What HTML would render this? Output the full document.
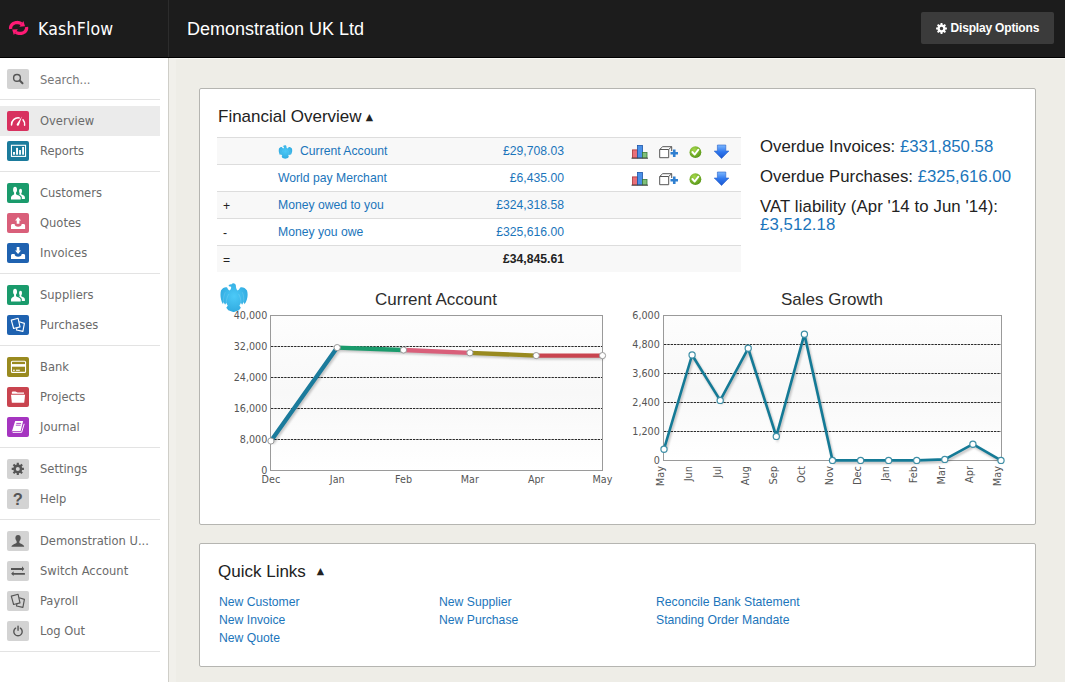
<!DOCTYPE html>
<html><head><meta charset="utf-8"><title>KashFlow</title>
<style>
*{box-sizing:border-box;margin:0;padding:0}
html,body{width:1065px;height:682px;overflow:hidden}
body{background:#eeede7;font-family:"Liberation Sans",sans-serif;position:relative;color:#333}
a{color:#1b75bb;text-decoration:none}
#hdr{position:absolute;left:0;top:0;width:1065px;height:58px;background:#1c1c1c;border-bottom:1px solid #000}
#hdr .sep{position:absolute;left:168px;top:0;width:1px;height:57px;background:#2c2c2c}
#logo{position:absolute;left:8px;top:20px}
#brand{position:absolute;left:38px;top:17.500px;font-family:'DejaVu Sans Condensed','DejaVu Sans',sans-serif;font-size:17.500px;letter-spacing:.2px;line-height:22px;color:#fff}
#co{position:absolute;left:187px;top:18px;font-size:18px;line-height:22px;color:#fff}
#dopt{position:absolute;left:921px;top:12px;width:133px;height:32px;background:#3b3b3b;border-radius:2px;color:#fff;font-weight:bold;font-size:12px;letter-spacing:-.18px;line-height:32px;padding-left:29.500px}
#dopt svg{position:absolute;left:15px;top:10.500px}
#main{position:absolute;left:169px;top:58px;width:896px;height:624px;border-top:1px solid #f8f8f4;border-left:7px solid #f1f0eb}
#side{position:absolute;left:0;top:58px;width:169px;height:624px;background:#fff;border-right:1px solid #cfcec8}
.it{position:absolute;left:0;width:160px;height:30px}
.it.sel{background:#ebebeb}
.it .ic{position:absolute;left:7px;top:5px}
.it .tx{position:absolute;left:40px;top:0;line-height:30px;font-family:"DejaVu Sans Condensed","DejaVu Sans",sans-serif;font-size:12.800px;color:#6a6a6a;white-space:nowrap}
.dv{position:absolute;left:0;width:160px;height:1px;background:#e3e3e3}
.panel{position:absolute;left:199px;width:837px;background:#fff;border:1px solid #b5b5b1;border-radius:2px}
h2{position:absolute;font-weight:normal;font-size:17px;line-height:20px;color:#222;white-space:nowrap}
h2 i{font-style:normal;font-family:'DejaVu Sans',sans-serif;font-size:9.500px;position:relative;top:-2.500px;left:-0.500px}
#tbl{position:absolute;left:17px;top:48px;width:524px;height:136px;border-top:1px solid #ddd}
.tr{position:absolute;left:0;width:524px;height:27px;border-bottom:1px solid #ddd;font-size:12.200px;line-height:26px}
.tr .sym{position:absolute;left:6px;top:1px;color:#222}
.tr .nm{position:absolute;left:61px;white-space:nowrap}
.tr .amt{position:absolute;right:177px;white-space:nowrap}
.tr .tot{color:#222}
.tr:last-child{border-bottom:0;height:26px}
.tr .ai{position:absolute;top:5px}
.tr .bsm{position:absolute;left:61px;top:7px}
.ov{position:absolute;left:560px;font-size:16.800px;line-height:18.400px;color:#222;white-space:nowrap}
.chart{position:absolute}
.cl{font-family:"DejaVu Sans",sans-serif;font-size:9.600px;fill:#555}
.cx{font-size:9.800px}
.ct{position:absolute;font-size:17px;line-height:20px;color:#2d2d2d;white-space:nowrap;text-align:center}
.ql{position:absolute;font-size:12.200px;line-height:18px;white-space:nowrap}
</style></head><body>
<div id="hdr"><div class="sep"></div>
<svg id="logo" width="22" height="16" viewBox="0 0 22 16"><g fill="none" stroke="#ff1a75" stroke-width="3.300"><path d="M2.70 8.91 L2.62 8.35 L2.60 7.79 L2.66 7.23 L2.79 6.67 L2.98 6.13 L3.24 5.61 L3.56 5.12 L3.94 4.65 L4.38 4.23 L4.87 3.84 L5.41 3.49 L5.98 3.19 L6.59 2.95 L7.22 2.75 L7.88 2.61 L8.55 2.53 L9.23 2.51 L9.90 2.55 L10.57 2.64 L11.22 2.79 L11.85 2.99 L12.46 3.25 L13.02 3.56 L13.55 3.91"/><path d="M18.50 7.01 L18.58 7.57 L18.60 8.13 L18.54 8.69 L18.41 9.25 L18.22 9.79 L17.96 10.31 L17.64 10.80 L17.26 11.27 L16.82 11.69 L16.33 12.08 L15.79 12.43 L15.22 12.73 L14.61 12.97 L13.98 13.17 L13.32 13.31 L12.65 13.39 L11.97 13.41 L11.30 13.37 L10.63 13.28 L9.98 13.13 L9.35 12.93 L8.74 12.67 L8.18 12.36 L7.65 12.01"/></g><path d="M11.38 6.66 L16.99 6.30 L15.38 0.91 Z" fill="#ff1a75"/><path d="M9.82 9.26 L4.21 9.62 L5.82 15.01 Z" fill="#ff1a75"/></svg>
<div id="brand">KashFlow</div>
<div id="co">Demonstration UK Ltd</div>
<div id="dopt"><svg width="11" height="11" viewBox="0 0 12 12"><path d="M11.91 4.97 L11.91 7.03 L10.36 7.12 L9.87 8.29 L10.91 9.45 L9.45 10.91 L8.29 9.87 L7.12 10.36 L7.03 11.91 L4.97 11.91 L4.88 10.36 L3.71 9.87 L2.55 10.91 L1.09 9.45 L2.13 8.29 L1.64 7.12 L0.09 7.03 L0.09 4.97 L1.64 4.88 L2.13 3.71 L1.09 2.55 L2.55 1.09 L3.71 2.13 L4.88 1.64 L4.97 0.09 L7.03 0.09 L7.12 1.64 L8.29 2.13 L9.45 1.09 L10.91 2.55 L9.87 3.71 L10.36 4.88 Z M7.90 6.00 A1.9 1.9 0 1 0 4.10 6.00 A1.9 1.9 0 1 0 7.90 6.00 Z" fill="#fff" fill-rule="evenodd"/></svg>Display Options</div>
</div>
<div id="main"></div>
<div id="side">
<div class="it" style="top:6px"><svg class="ic" viewBox="0 0 22 20" width="22" height="20"><rect width="22" height="20" rx="2" fill="#d3d3d3"/><circle cx="10" cy="8.900" r="3.400" fill="none" stroke="#555" stroke-width="1.400"/><path d="M12.700 11.500 L15.500 14.200" stroke="#555" stroke-width="2" stroke-linecap="round"/></svg><span class="tx" style=color:#777;top:1px>Search...</span></div>
<div class="it sel" style="top:48px"><svg class="ic" viewBox="0 0 22 20" width="22" height="20"><rect width="22" height="20" rx="2" fill="#d8315f"/><path d="M4.500 14 A6.800 6.800 0 0 1 12.200 6.900" fill="none" stroke="#fff" stroke-width="1.500" stroke-linecap="round"/><path d="M16 8.700 A6.800 6.800 0 0 1 17.600 14.200" fill="none" stroke="#fff" stroke-width="1.500" stroke-linecap="round"/><path d="M9.800 13 L14.900 5.400 L12 14.100 A1.200 1.200 0 0 1 9.800 13 Z" fill="#fff"/></svg><span class="tx">Overview</span></div>
<div class="it" style="top:78px"><svg class="ic" viewBox="0 0 22 20" width="22" height="20"><rect width="22" height="20" rx="2" fill="#1b7b9c"/><rect x="4.450" y="4.300" width="14.100" height="11.100" fill="none" stroke="#fff" stroke-width="1.100"/><rect x="6" y="11" width="1.950" height="2.700" fill="#fff"/><rect x="9.050" y="6.850" width="1.950" height="6.850" fill="#fff"/><rect x="12.100" y="9.050" width="1.850" height="4.650" fill="#fff"/><rect x="15.150" y="6" width="1.850" height="7.700" fill="#fff"/></svg><span class="tx">Reports</span></div>
<div class="it" style="top:120px"><svg class="ic" viewBox="0 0 22 20" width="22" height="20"><rect width="22" height="20" rx="2" fill="#1a9b6c"/><ellipse cx="8.050" cy="6.700" rx="1.950" ry="2.950" fill="#fff"/><path d="M7.100 8.500 H9 V11.300 C10.200 12.300 13.700 12.800 13.700 14.600 V16.500 H4 V14.600 C4 12.800 6 12.300 7.100 11.300 Z" fill="#fff"/><ellipse cx="13.550" cy="8.100" rx="1.500" ry="2.400" fill="#fff"/><path d="M12.800 9.800 H14.300 V11.300 C15.200 12.100 17.900 12.500 17.900 14.200 V16.100 H14.800 V14.300 C14.800 12.900 13.400 12.300 12.400 11.700 Z" fill="#fff"/></svg><span class="tx">Customers</span></div>
<div class="it" style="top:150px"><svg class="ic" viewBox="0 0 22 20" width="22" height="20"><rect width="22" height="20" rx="2" fill="#d95f7a"/><path d="M11.050 3.900 L14 7.400 H12.400 V10.800 H9.700 V7.400 H8.100 Z" fill="#fff"/><path d="M4 16.100 V12.500 C4 11.500 4.800 11 5.600 11 H7.600 C7.600 12.800 9 13.800 11.100 13.800 C13.200 13.800 14.700 12.800 14.700 11 H16.500 C17.400 11 18.100 11.500 18.100 12.500 V16.100 Z" fill="#fff"/></svg><span class="tx">Quotes</span></div>
<div class="it" style="top:180px"><svg class="ic" viewBox="0 0 22 20" width="22" height="20"><rect width="22" height="20" rx="2" fill="#1f62b0"/><path d="M11.050 11 L14 7.600 H12.400 V4 H9.700 V7.600 H8.100 Z" fill="#fff"/><path d="M4 16.100 V12.500 C4 11.500 4.800 11 5.600 11 H7.600 C7.600 12.800 9 13.800 11.100 13.800 C13.200 13.800 14.700 12.800 14.700 11 H16.500 C17.400 11 18.100 11.500 18.100 12.500 V16.100 Z" fill="#fff"/></svg><span class="tx">Invoices</span></div>
<div class="it" style="top:222px"><svg class="ic" viewBox="0 0 22 20" width="22" height="20"><rect width="22" height="20" rx="2" fill="#1a9b6c"/><ellipse cx="8.050" cy="6.700" rx="1.950" ry="2.950" fill="#fff"/><path d="M7.100 8.500 H9 V11.300 C10.200 12.300 13.700 12.800 13.700 14.600 V16.500 H4 V14.600 C4 12.800 6 12.300 7.100 11.300 Z" fill="#fff"/><ellipse cx="13.550" cy="8.100" rx="1.500" ry="2.400" fill="#fff"/><path d="M12.800 9.800 H14.300 V11.300 C15.200 12.100 17.900 12.500 17.900 14.200 V16.100 H14.800 V14.300 C14.800 12.900 13.400 12.300 12.400 11.700 Z" fill="#fff"/></svg><span class="tx">Suppliers</span></div>
<div class="it" style="top:252px"><svg class="ic" viewBox="0 0 22 20" width="22" height="20"><rect width="22" height="20" rx="2" fill="#1f62b0"/><g fill="none" stroke="#fff" stroke-width="1.150" stroke-linejoin="round"><path d="M4.300 5.100 L11.100 3.300 L13 11.900 L6.600 13.500 Z"/><path d="M12.200 6.700 L17.400 8.400 L15.900 16.400 L9.500 15 L9.950 12.700"/></g></svg><span class="tx">Purchases</span></div>
<div class="it" style="top:294px"><svg class="ic" viewBox="0 0 22 20" width="22" height="20"><rect width="22" height="20" rx="2" fill="#998a1f"/><rect x="4.450" y="4.300" width="14.100" height="11.100" rx="1" fill="none" stroke="#fff" stroke-width="1.100"/><rect x="4.450" y="7.100" width="14.100" height="2.600" fill="#fff"/><rect x="6" y="12.700" width="1.800" height="1.100" fill="#fff"/><rect x="9" y="12.700" width="3.800" height="1.100" fill="#fff"/></svg><span class="tx">Bank</span></div>
<div class="it" style="top:324px"><svg class="ic" viewBox="0 0 22 20" width="22" height="20"><rect width="22" height="20" rx="2" fill="#c9444f"/><path d="M4.850 6.800 V5.300 C4.850 4.700 5.300 4.400 5.800 4.400 H8.400 L10.600 5.500 H17 V6.800 Z" fill="#fff"/><path d="M4 7.700 H18.100 L17.200 15.700 H4.850 Z" fill="#fff"/></svg><span class="tx">Projects</span></div>
<div class="it" style="top:354px"><svg class="ic" viewBox="0 0 22 20" width="22" height="20"><rect width="22" height="20" rx="2" fill="#a535c0"/><path d="M8.200 4 H16.100 L13.700 13.900 H5.100 Z" fill="#fff"/><path d="M5.300 14.700 L5.800 15.300 H14.700 L17.200 6.800" fill="none" stroke="#fff" stroke-width="1"/><path d="M9.300 6.400 H14.100 M8.800 8.200 H13.700" stroke="#a535c0" stroke-width="0.900"/></svg><span class="tx">Journal</span></div>
<div class="it" style="top:396px"><svg class="ic" viewBox="0 0 22 20" width="22" height="20"><rect width="22" height="20" rx="2" fill="#d3d3d3"/><path d="M16.91 8.83 L16.91 10.97 L15.16 11.02 L14.67 12.19 L15.87 13.47 L14.37 14.97 L13.09 13.77 L11.92 14.26 L11.87 16.01 L9.73 16.01 L9.68 14.26 L8.51 13.77 L7.23 14.97 L5.73 13.47 L6.93 12.19 L6.44 11.02 L4.69 10.97 L4.69 8.83 L6.44 8.78 L6.93 7.61 L5.73 6.33 L7.23 4.83 L8.51 6.03 L9.68 5.54 L9.73 3.79 L11.87 3.79 L11.92 5.54 L13.09 6.03 L14.37 4.83 L15.87 6.33 L14.67 7.61 L15.16 8.78 Z M12.80 9.90 A2.0 2.0 0 1 0 8.80 9.90 A2.0 2.0 0 1 0 12.80 9.90 Z" fill="#555" fill-rule="evenodd"/></svg><span class="tx">Settings</span></div>
<div class="it" style="top:426px"><svg class="ic" viewBox="0 0 22 20" width="22" height="20"><rect width="22" height="20" rx="2" fill="#d3d3d3"/><text x="10.900" y="15.700" text-anchor="middle" font-family="Liberation Sans, sans-serif" font-weight="bold" font-size="16.500" fill="#555">?</text></svg><span class="tx">Help</span></div>
<div class="it" style="top:468px"><svg class="ic" viewBox="0 0 22 20" width="22" height="20"><rect width="22" height="20" rx="2" fill="#d3d3d3"/><ellipse cx="11.050" cy="7" rx="2.650" ry="3.100" fill="#555"/><path d="M4.400 15.700 C4.600 14.200 6 13.600 9.600 12 V9 H12.400 V12 C16 13.600 17 14.200 17.200 15.700 Z" fill="#555"/></svg><span class="tx">Demonstration U...</span></div>
<div class="it" style="top:498px"><svg class="ic" viewBox="0 0 22 20" width="22" height="20"><rect width="22" height="20" rx="2" fill="#d3d3d3"/><path d="M4 7.100 H15 V5.300 L17.300 8 L15 10.200 V8.900 H4 Z" fill="#555"/><path d="M17.900 11.900 H6.600 V10.300 L4.100 12.700 L6.600 14.900 V13.700 H17.900 Z" fill="#555"/></svg><span class="tx">Switch Account</span></div>
<div class="it" style="top:528px"><svg class="ic" viewBox="0 0 22 20" width="22" height="20"><rect width="22" height="20" rx="2" fill="#d3d3d3"/><g fill="none" stroke="#555" stroke-width="1.150" stroke-linejoin="round"><path d="M4.300 5.100 L11.100 3.300 L13 11.900 L6.600 13.500 Z"/><path d="M12.200 6.700 L17.400 8.400 L15.900 16.400 L9.500 15 L9.950 12.700"/></g></svg><span class="tx">Payroll</span></div>
<div class="it" style="top:558px"><svg class="ic" viewBox="0 0 22 20" width="22" height="20"><rect width="22" height="20" rx="2" fill="#d3d3d3"/><path d="M8.600 7.160 A4.200 4.200 0 1 0 13.400 7.160" fill="none" stroke="#555" stroke-width="1.400" stroke-linecap="round"/><path d="M11.050 5.100 V9.300" stroke="#555" stroke-width="1.400" stroke-linecap="round"/></svg><span class="tx">Log Out</span></div>
<div class="dv" style="top:41px"></div>
<div class="dv" style="top:113px"></div>
<div class="dv" style="top:215px"></div>
<div class="dv" style="top:287px"></div>
<div class="dv" style="top:389px"></div>
<div class="dv" style="top:461px"></div>
<div class="dv" style="top:593px"></div>
</div>
<div class="panel" id="p1" style="top:88px;height:437px">
<h2 style="left:18px;top:18px">Financial Overview <i>▲</i></h2>
<div id="tbl">
<div class="tr" style="top:0px;background:#f8f8f8"><svg class="bsm" width="14.5" height="14" viewBox="140 120 440 445" preserveAspectRatio="none"><defs><radialGradient id="eg2" cx=".5" cy=".45" r=".6"><stop offset="0" stop-color="#4ccaf8"/><stop offset="1" stop-color="#2fa8de"/></radialGradient></defs><path d="M355 125 C375 125 395 140 395 160 C395 185 400 215 420 232 C440 225 450 205 462 188 C490 178 540 195 562 235 C580 290 575 370 525 442 L512 405 L488 448 L470 418 L452 458 L440 440 C450 470 465 485 470 492 L440 530 L360 560 L280 530 L250 492 C255 485 270 470 280 440 L268 458 L250 418 L232 448 L208 405 L200 442 C160 370 155 290 170 235 C190 195 235 178 262 188 C270 205 280 225 300 232 C318 220 325 200 322 178 L290 168 L285 150 C300 145 320 140 330 138 C338 130 345 125 355 125 Z" fill="url(#eg2)"/><path d="M208 405 C205 350 215 300 235 260 M250 418 C250 370 265 320 290 285 M512 405 C518 350 510 300 492 260 M470 418 C472 370 458 320 435 285" fill="none" stroke="#fff" stroke-opacity=".3" stroke-width="7"/></svg><a class="nm" style="left:83px">Current Account</a><a class="amt">£29,708.03</a><svg class="ai" style="left:414px" width="18" height="16" viewBox="0 0 18 16"><rect x="1.500" y="6.900" width="5" height="8" fill="#e8707a" stroke="#a33" stroke-width=".8"/><rect x="6.500" y="2.500" width="5" height="12.400" fill="#4a90e8" stroke="#1d55a8" stroke-width=".8"/><rect x="11.500" y="9.500" width="4.500" height="5.400" fill="#7fc07a" stroke="#3a7a3a" stroke-width=".8"/><path d="M0.500 15.200 H17" stroke="#444" stroke-width="1"/></svg>
<svg class="ai" style="left:442px" width="20" height="16" viewBox="0 0 20 16"><path d="M0.700 6.500 H9.700 V14.700 H0.700 Z M0.700 6.500 L3.700 3.700 H12.700 L9.700 6.500 M12.700 3.700 V8" fill="#fff" stroke="#555" stroke-width="1"/><path d="M11.500 10.200 H19 M15.250 6.500 V13.900" stroke="#2f7fd0" stroke-width="2.600"/></svg>
<svg class="ai" style="left:471px" width="15" height="16" viewBox="0 0 15 16"><defs><radialGradient id="gg" cx=".4" cy=".3" r=".8"><stop offset="0" stop-color="#a6d84a"/><stop offset="1" stop-color="#4f8f12"/></radialGradient></defs><circle cx="7.400" cy="9.200" r="5.900" fill="url(#gg)"/><path d="M4.400 9 L6.700 11.500 L10.400 6.700" fill="none" stroke="#fff" stroke-width="1.900" stroke-linecap="round" stroke-linejoin="round"/></svg>
<svg class="ai" style="left:495px" width="18" height="16" viewBox="0 0 18 16"><defs><linearGradient id="bg1" x1="0" y1="0" x2="0" y2="1"><stop offset="0" stop-color="#7db8ff"/><stop offset=".5" stop-color="#2f78ee"/><stop offset="1" stop-color="#1a56d0"/></linearGradient></defs><path d="M5.400 2 H13.800 V8 H16.900 L9.550 15.500 L2.200 8 H5.400 Z" fill="url(#bg1)" stroke="#2a62c8" stroke-width=".6"/></svg></div>
<div class="tr" style="top:27px;background:#fff"><a class="nm">World pay Merchant</a><a class="amt">£6,435.00</a><svg class="ai" style="left:414px" width="18" height="16" viewBox="0 0 18 16"><rect x="1.500" y="6.900" width="5" height="8" fill="#e8707a" stroke="#a33" stroke-width=".8"/><rect x="6.500" y="2.500" width="5" height="12.400" fill="#4a90e8" stroke="#1d55a8" stroke-width=".8"/><rect x="11.500" y="9.500" width="4.500" height="5.400" fill="#7fc07a" stroke="#3a7a3a" stroke-width=".8"/><path d="M0.500 15.200 H17" stroke="#444" stroke-width="1"/></svg>
<svg class="ai" style="left:442px" width="20" height="16" viewBox="0 0 20 16"><path d="M0.700 6.500 H9.700 V14.700 H0.700 Z M0.700 6.500 L3.700 3.700 H12.700 L9.700 6.500 M12.700 3.700 V8" fill="#fff" stroke="#555" stroke-width="1"/><path d="M11.500 10.200 H19 M15.250 6.500 V13.900" stroke="#2f7fd0" stroke-width="2.600"/></svg>
<svg class="ai" style="left:471px" width="15" height="16" viewBox="0 0 15 16"><defs><radialGradient id="gg2" cx=".4" cy=".3" r=".8"><stop offset="0" stop-color="#a6d84a"/><stop offset="1" stop-color="#4f8f12"/></radialGradient></defs><circle cx="7.400" cy="9.200" r="5.900" fill="url(#gg2)"/><path d="M4.400 9 L6.700 11.500 L10.400 6.700" fill="none" stroke="#fff" stroke-width="1.900" stroke-linecap="round" stroke-linejoin="round"/></svg>
<svg class="ai" style="left:495px" width="18" height="16" viewBox="0 0 18 16"><defs><linearGradient id="bg2" x1="0" y1="0" x2="0" y2="1"><stop offset="0" stop-color="#7db8ff"/><stop offset=".5" stop-color="#2f78ee"/><stop offset="1" stop-color="#1a56d0"/></linearGradient></defs><path d="M5.400 2 H13.800 V8 H16.900 L9.550 15.500 L2.200 8 H5.400 Z" fill="url(#bg2)" stroke="#2a62c8" stroke-width=".6"/></svg></div>
<div class="tr" style="top:54px;background:#f8f8f8"><span class="sym">+</span><a class="nm">Money owed to you</a><a class="amt">£324,318.58</a></div>
<div class="tr" style="top:81px;background:#fff"><span class="sym">-</span><a class="nm">Money you owe</a><a class="amt">£325,616.00</a></div>
<div class="tr" style="top:108px;background:#f8f8f8"><span class="sym">=</span><b class="amt tot">£34,845.61</b></div>
</div>
<div class="ov" style="top:49px">Overdue Invoices: <a>£331,850.58</a></div>
<div class="ov" style="top:79px">Overdue Purchases: <a>£325,616.00</a></div>
<div class="ov" style="top:108.500px;letter-spacing:.09px">VAT liability (Apr '14 to Jun '14):<br><a>£3,512.18</a></div>
</div>
<svg style="position:absolute;left:219.200px;top:282.900px" width="29.2" height="29.5" viewBox="140 120 440 445" preserveAspectRatio="none"><defs><radialGradient id="eg1" cx=".5" cy=".45" r=".6"><stop offset="0" stop-color="#4ccaf8"/><stop offset="1" stop-color="#2fa8de"/></radialGradient></defs><path d="M355 125 C375 125 395 140 395 160 C395 185 400 215 420 232 C440 225 450 205 462 188 C490 178 540 195 562 235 C580 290 575 370 525 442 L512 405 L488 448 L470 418 L452 458 L440 440 C450 470 465 485 470 492 L440 530 L360 560 L280 530 L250 492 C255 485 270 470 280 440 L268 458 L250 418 L232 448 L208 405 L200 442 C160 370 155 290 170 235 C190 195 235 178 262 188 C270 205 280 225 300 232 C318 220 325 200 322 178 L290 168 L285 150 C300 145 320 140 330 138 C338 130 345 125 355 125 Z" fill="url(#eg1)"/><path d="M208 405 C205 350 215 300 235 260 M250 418 C250 370 265 320 290 285 M512 405 C518 350 510 300 492 260 M470 418 C472 370 458 320 435 285" fill="none" stroke="#fff" stroke-opacity=".3" stroke-width="7"/></svg>
<div class="ct" style="left:336px;top:290px;width:200px">Current Account</div>
<div class="ct" style="left:732px;top:290px;width:200px">Sales Growth</div>
<svg class="chart" style="left:205px;top:285px" width="420" height="215" viewBox="0 0 420 215"><defs><linearGradient id="pg" x1="0" y1="0" x2="0" y2="1"><stop offset="0" stop-color="#fdfdfd"/><stop offset=".5" stop-color="#f8f8f8"/><stop offset="1" stop-color="#ffffff"/></linearGradient><filter id="sh" x="-10%" y="-30%" width="120%" height="160%"><feGaussianBlur stdDeviation="1.200"/></filter></defs><rect x="65.5" y="30.5" width="332.0" height="155.0" fill="url(#pg)" stroke="#9a9a9a" stroke-width="1"/><text x="62.3" y="34.3" text-anchor="end" class="cl">40,000</text><path d="M66 61.5 H397" stroke="#2a2a2a" stroke-width="1" stroke-dasharray="2.400 0.900"/><text x="62.3" y="65.3" text-anchor="end" class="cl">32,000</text><path d="M66 92.5 H397" stroke="#2a2a2a" stroke-width="1" stroke-dasharray="2.400 0.900"/><text x="62.3" y="96.3" text-anchor="end" class="cl">24,000</text><path d="M66 123.5 H397" stroke="#2a2a2a" stroke-width="1" stroke-dasharray="2.400 0.900"/><text x="62.3" y="127.3" text-anchor="end" class="cl">16,000</text><path d="M66 154.5 H397" stroke="#2a2a2a" stroke-width="1" stroke-dasharray="2.400 0.900"/><text x="62.3" y="158.3" text-anchor="end" class="cl">8,000</text><text x="62.3" y="189.3" text-anchor="end" class="cl">0</text><text x="65.9" y="198.3" text-anchor="middle" class="cl">Dec</text><text x="132.2" y="198.3" text-anchor="middle" class="cl">Jan</text><text x="198.5" y="198.3" text-anchor="middle" class="cl">Feb</text><text x="264.9" y="198.3" text-anchor="middle" class="cl">Mar</text><text x="331.2" y="198.3" text-anchor="middle" class="cl">Apr</text><text x="397.5" y="198.3" text-anchor="middle" class="cl">May</text><polyline points="67.4,158.0 133.7,64.6 200.0,67.0 266.4,69.8 332.7,72.6 399.0,72.6" fill="none" stroke="#000" stroke-opacity=".22" stroke-width="4" filter="url(#sh)"/><path d="M65.9 156.0 L132.2 62.6" stroke="#1b7b9c" stroke-width="4.300" stroke-linecap="round"/><path d="M132.2 62.6 L198.5 65.0" stroke="#1a9b6c" stroke-width="4.300" stroke-linecap="round"/><path d="M198.5 65.0 L264.9 67.8" stroke="#d95f7a" stroke-width="4.300" stroke-linecap="round"/><path d="M264.9 67.8 L331.2 70.6" stroke="#998a1f" stroke-width="4.300" stroke-linecap="round"/><path d="M331.2 70.6 L397.5 70.6" stroke="#c9444f" stroke-width="4.300" stroke-linecap="round"/><circle cx="65.9" cy="156.0" r="3.100" fill="#fff" stroke="#999" stroke-width="1"/><circle cx="132.2" cy="62.6" r="3.100" fill="#fff" stroke="#999" stroke-width="1"/><circle cx="198.5" cy="65.0" r="3.100" fill="#fff" stroke="#999" stroke-width="1"/><circle cx="264.9" cy="67.8" r="3.100" fill="#fff" stroke="#999" stroke-width="1"/><circle cx="331.2" cy="70.6" r="3.100" fill="#fff" stroke="#999" stroke-width="1"/><circle cx="397.5" cy="70.6" r="3.100" fill="#fff" stroke="#999" stroke-width="1"/></svg>
<svg class="chart" style="left:625px;top:285px" width="400" height="215" viewBox="0 0 400 215"><rect x="38.5" y="30.5" width="338.0" height="145.0" fill="url(#pg)" stroke="#9a9a9a" stroke-width="1"/><text x="34.8" y="34.4" text-anchor="end" class="cl">6,000</text><path d="M39 59.5 H376" stroke="#2a2a2a" stroke-width="1" stroke-dasharray="2.400 0.900"/><text x="34.8" y="63.4" text-anchor="end" class="cl">4,800</text><path d="M39 88.5 H376" stroke="#2a2a2a" stroke-width="1" stroke-dasharray="2.400 0.900"/><text x="34.8" y="92.4" text-anchor="end" class="cl">3,600</text><path d="M39 117.5 H376" stroke="#2a2a2a" stroke-width="1" stroke-dasharray="2.400 0.900"/><text x="34.8" y="121.4" text-anchor="end" class="cl">2,400</text><path d="M39 146.5 H376" stroke="#2a2a2a" stroke-width="1" stroke-dasharray="2.400 0.900"/><text x="34.8" y="150.4" text-anchor="end" class="cl">1,200</text><text x="34.8" y="179.4" text-anchor="end" class="cl">0</text><text transform="translate(39.3,181) rotate(-90)" text-anchor="end" class="cl cx">May</text><text transform="translate(67.4,181) rotate(-90)" text-anchor="end" class="cl cx">Jun</text><text transform="translate(95.5,181) rotate(-90)" text-anchor="end" class="cl cx">Jul</text><text transform="translate(123.5,181) rotate(-90)" text-anchor="end" class="cl cx">Aug</text><text transform="translate(151.6,181) rotate(-90)" text-anchor="end" class="cl cx">Sep</text><text transform="translate(179.7,181) rotate(-90)" text-anchor="end" class="cl cx">Oct</text><text transform="translate(207.8,181) rotate(-90)" text-anchor="end" class="cl cx">Nov</text><text transform="translate(235.9,181) rotate(-90)" text-anchor="end" class="cl cx">Dec</text><text transform="translate(263.9,181) rotate(-90)" text-anchor="end" class="cl cx">Jan</text><text transform="translate(292.0,181) rotate(-90)" text-anchor="end" class="cl cx">Feb</text><text transform="translate(320.1,181) rotate(-90)" text-anchor="end" class="cl cx">Mar</text><text transform="translate(348.2,181) rotate(-90)" text-anchor="end" class="cl cx">Apr</text><text transform="translate(376.3,181) rotate(-90)" text-anchor="end" class="cl cx">May</text><polyline points="40.2,166.2 68.3,72.0 96.4,117.4 124.4,65.3 152.5,153.4 180.6,51.2 208.7,177.4 236.8,177.4 264.8,177.4 292.9,177.4 321.0,176.4 349.1,161.2 377.2,177.4" fill="none" stroke="#000" stroke-opacity=".25" stroke-width="2.600" filter="url(#sh)"/><polyline points="39.0,164.2 67.1,70.0 95.2,115.4 123.2,63.3 151.3,151.4 179.4,49.2 207.5,175.4 235.6,175.4 263.6,175.4 291.7,175.4 319.8,174.4 347.9,159.2 376.0,175.4" fill="none" stroke="#147a96" stroke-width="2.600" stroke-linejoin="round"/><circle cx="39.0" cy="164.2" r="3.100" fill="#fff" stroke="#3f8fa6" stroke-width="1.200"/><circle cx="67.1" cy="70.0" r="3.100" fill="#fff" stroke="#3f8fa6" stroke-width="1.200"/><circle cx="95.2" cy="115.4" r="3.100" fill="#fff" stroke="#3f8fa6" stroke-width="1.200"/><circle cx="123.2" cy="63.3" r="3.100" fill="#fff" stroke="#3f8fa6" stroke-width="1.200"/><circle cx="151.3" cy="151.4" r="3.100" fill="#fff" stroke="#3f8fa6" stroke-width="1.200"/><circle cx="179.4" cy="49.2" r="3.100" fill="#fff" stroke="#3f8fa6" stroke-width="1.200"/><circle cx="207.5" cy="175.4" r="3.100" fill="#fff" stroke="#3f8fa6" stroke-width="1.200"/><circle cx="235.6" cy="175.4" r="3.100" fill="#fff" stroke="#3f8fa6" stroke-width="1.200"/><circle cx="263.6" cy="175.4" r="3.100" fill="#fff" stroke="#3f8fa6" stroke-width="1.200"/><circle cx="291.7" cy="175.4" r="3.100" fill="#fff" stroke="#3f8fa6" stroke-width="1.200"/><circle cx="319.8" cy="174.4" r="3.100" fill="#fff" stroke="#3f8fa6" stroke-width="1.200"/><circle cx="347.9" cy="159.2" r="3.100" fill="#fff" stroke="#3f8fa6" stroke-width="1.200"/><circle cx="376.0" cy="175.4" r="3.100" fill="#fff" stroke="#3f8fa6" stroke-width="1.200"/></svg>
<div class="panel" id="p2" style="top:543px;height:124px">
<h2 style="left:18px;top:18px">Quick Links&nbsp; <i style="left:1.500px;top:-3.500px">▲</i></h2>
<a class="ql" style="left:19px;top:49px">New Customer</a>
<a class="ql" style="left:19px;top:67px">New Invoice</a>
<a class="ql" style="left:19px;top:85px">New Quote</a>
<a class="ql" style="left:239px;top:49px">New Supplier</a>
<a class="ql" style="left:239px;top:67px">New Purchase</a>
<a class="ql" style="left:456px;top:49px">Reconcile Bank Statement</a>
<a class="ql" style="left:456px;top:67px">Standing Order Mandate</a>
</div>
</body></html>
